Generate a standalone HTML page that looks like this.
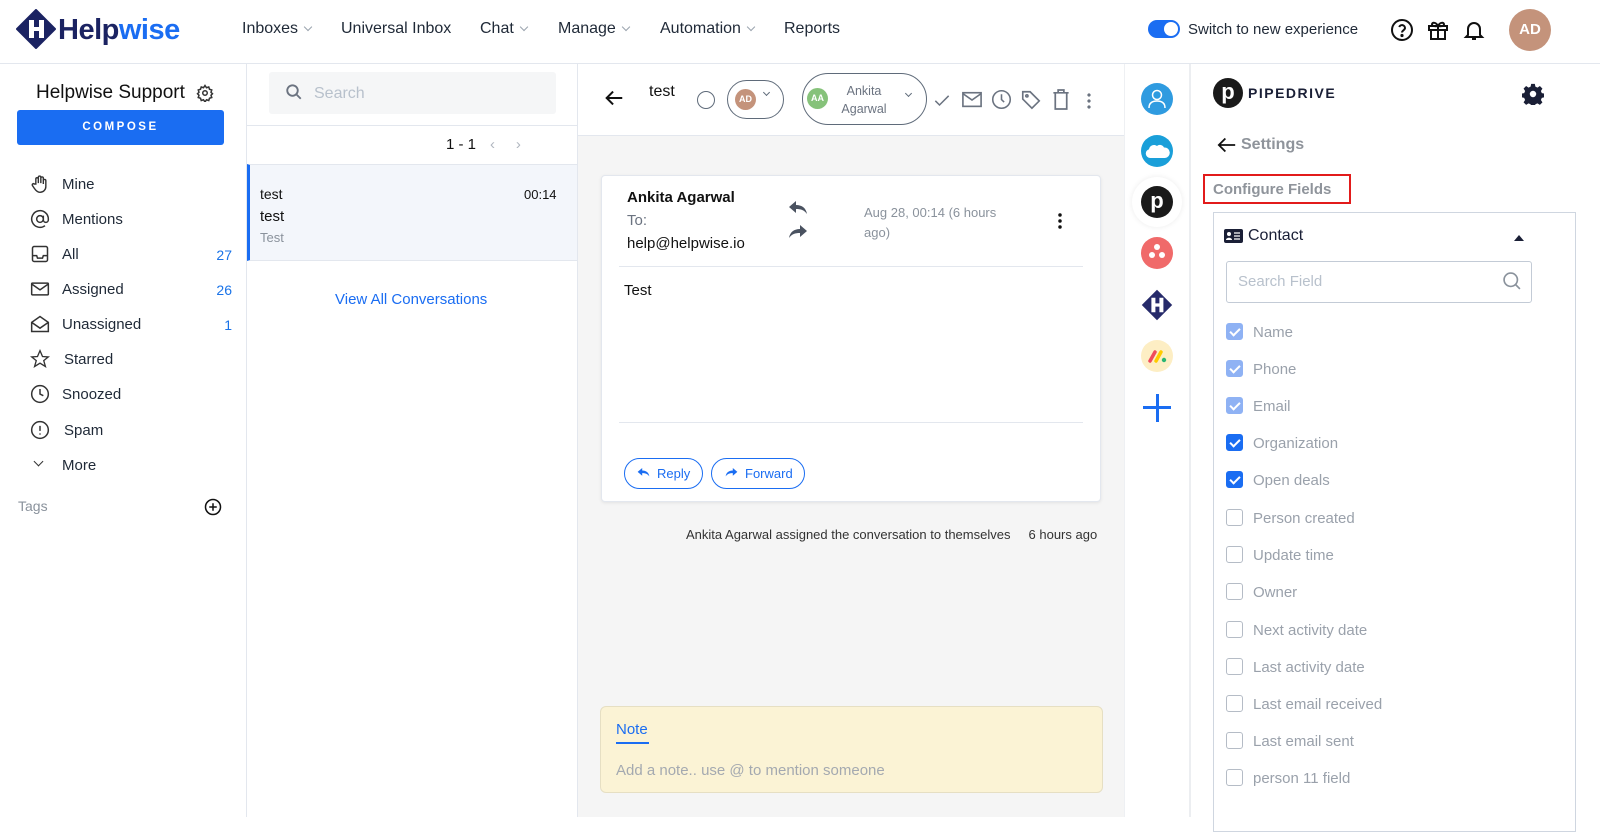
<!DOCTYPE html>
<html><head><meta charset="utf-8"><style>
*{box-sizing:border-box;margin:0;padding:0}
body{width:1600px;height:817px;overflow:hidden;font-family:"Liberation Sans",Arial,sans-serif;color:#1a1f36;background:#fff;position:relative}
.a{position:absolute}
.nav{font-size:16px;color:#1f2937;top:20px}
.chev{display:inline-block;width:6px;height:6px;border-right:1.3px solid #9aa3ae;border-bottom:1.3px solid #9aa3ae;transform:rotate(45deg);margin-left:7px;position:relative;top:-3px}
.side{font-size:15px;color:#1f2937;left:62px}
.cnt{font-size:14px;color:#1a73e8;right:1368px}
.ico{left:30px;width:20px;height:20px}
.cb{left:1226px;width:17px;height:17px;border:1.5px solid #b5bcc6;border-radius:3px}
.cb.on{background:#1a6df2;border-color:#1a6df2}
.cb.lt{background:#8fb2f4;border-color:#8fb2f4}
.cb.on:after,.cb.lt:after{content:"";position:absolute;left:4.5px;top:1.5px;width:4px;height:8px;border-right:2px solid #fff;border-bottom:2px solid #fff;transform:rotate(45deg)}
.fl{left:1253px;font-size:15px;color:#9aa1ab}
.rail{left:1141px;width:32px;height:32px;border-radius:50%}
</style></head><body>
<!-- top nav -->
<div class="a" style="left:0;top:63px;width:1600px;height:1px;background:#e3e7ee"></div>
<svg class="a" style="left:16px;top:9px" width="40" height="40" viewBox="0 0 40 40"><path d="M20 1 L39 20 L20 39 L1 20Z" fill="#1b2362" stroke="#1b2362" stroke-width="2" stroke-linejoin="round"/><path d="M13 11h5v7h5v-7h5v18h-5v-7h-5v7h-5z" fill="#fff"/></svg>
<div class="a" style="left:58px;top:14px;font-size:29px;font-weight:bold;color:#1b2362;letter-spacing:-0.5px">Help<span style="color:#1a6df2">wise</span></div>
<div class="a nav" style="left:242px">Inboxes<span class="chev"></span></div>
<div class="a nav" style="left:341px">Universal Inbox</div>
<div class="a nav" style="left:480px">Chat<span class="chev"></span></div>
<div class="a nav" style="left:558px">Manage<span class="chev"></span></div>
<div class="a nav" style="left:660px">Automation<span class="chev"></span></div>
<div class="a nav" style="left:784px">Reports</div>
<div class="a" style="left:1148px;top:20px;width:32px;height:18px;border-radius:9px;background:#1a6df2"><div style="position:absolute;right:2px;top:2px;width:14px;height:14px;border-radius:50%;background:#fff"></div></div>
<div class="a" style="left:1188px;top:21px;font-size:15px;color:#1f2937">Switch to new experience</div>
<svg class="a" style="left:1390px;top:18px" width="24" height="24" viewBox="0 0 24 24" fill="none" stroke="#111" stroke-width="2"><circle cx="12" cy="12" r="10"/><path d="M9.2 9a3 3 0 0 1 5.8 1c0 2-3 2.5-3 4.5"/><circle cx="12" cy="17.5" r=".6" fill="#111"/></svg>
<svg class="a" style="left:1426px;top:18px" width="24" height="24" viewBox="0 0 24 24" fill="none" stroke="#111" stroke-width="2"><rect x="3" y="8" width="18" height="4"/><path d="M5 12v9h14v-9M12 8v13M12 8c-2-4-6-4-6-1.5S12 8 12 8c2-4 6-4 6-1.5S12 8 12 8"/></svg>
<svg class="a" style="left:1462px;top:18px" width="24" height="24" viewBox="0 0 24 24" fill="none" stroke="#111" stroke-width="2"><path d="M6 17V11a6 6 0 0 1 12 0v6l2 2H4z M10 21h4"/></svg>
<div class="a" style="left:1509px;top:9px;width:42px;height:42px;border-radius:50%;background:#c4937b;color:#fff;font-size:15px;font-weight:bold;text-align:center;line-height:42px">AD</div>

<!-- left sidebar -->
<div class="a" style="left:246px;top:64px;width:1px;height:753px;background:#e3e7ee"></div>
<div class="a" style="left:36px;top:82px;font-size:19px;color:#111">Helpwise Support</div>
<svg class="a" style="left:196px;top:84px" width="18" height="18" viewBox="0 0 24 24" fill="none" stroke="#333" stroke-width="2"><circle cx="12" cy="12" r="3"/><path d="M12 2l2 3 3-1 1 3 3 1-1 3 2 2-2 2 1 3-3 1-1 3-3-1-2 3-2-3-3 1-1-3-3-1 1-3-2-2 2-2-1-3 3-1 1-3 3 1z"/></svg>
<div class="a" style="left:17px;top:110px;width:207px;height:35px;background:#1a6df2;border-radius:3px;color:#fff;font-size:11.5px;font-weight:bold;letter-spacing:2.5px;text-align:center;line-height:35px">COMPOSE</div>
<svg class="a ico" style="top:174px" viewBox="0 0 24 24" fill="none" stroke="#333" stroke-width="1.7"><path d="M7 12V6a1.5 1.5 0 0 1 3 0v5V4a1.5 1.5 0 0 1 3 0v7V5a1.5 1.5 0 0 1 3 0v7-4a1.5 1.5 0 0 1 3 0v7c0 4-3 7-7 7-3 0-5-2-7-5l-2-3c-1-2 1-3 2-2z"/></svg>
<div class="a side" style="top:176px">Mine</div>
<svg class="a ico" style="top:209px" viewBox="0 0 24 24" fill="none" stroke="#333" stroke-width="1.8"><circle cx="12" cy="12" r="4"/><path d="M16 8v5a3 3 0 0 0 6 0v-1a10 10 0 1 0-4 8"/></svg>
<div class="a side" style="top:211px">Mentions</div>
<svg class="a ico" style="top:244px" viewBox="0 0 24 24" fill="none" stroke="#333" stroke-width="1.8"><rect x="3" y="3" width="18" height="18" rx="2"/><path d="M3 14h5l1 3h6l1-3h5"/></svg>
<div class="a side" style="top:246px">All</div><div class="a cnt" style="top:247px">27</div>
<svg class="a ico" style="top:279px" viewBox="0 0 24 24" fill="none" stroke="#333" stroke-width="1.8"><rect x="2" y="5" width="20" height="14" rx="1"/><path d="M2 6l10 7 10-7"/></svg>
<div class="a side" style="top:281px">Assigned</div><div class="a cnt" style="top:282px">26</div>
<svg class="a ico" style="top:314px" viewBox="0 0 24 24" fill="none" stroke="#333" stroke-width="1.8"><path d="M2 10l10-7 10 7v11H2z M2 10l10 7 10-7"/></svg>
<div class="a side" style="top:316px">Unassigned</div><div class="a cnt" style="top:317px">1</div>
<svg class="a ico" style="top:349px" viewBox="0 0 24 24" fill="none" stroke="#333" stroke-width="1.6"><path d="M12 2l3 7 7 .5-5.5 4.5 2 7-6.5-4-6.5 4 2-7L2 9.5 9 9z"/></svg>
<div class="a side" style="top:351px;left:64px">Starred</div>
<svg class="a ico" style="top:384px" viewBox="0 0 24 24" fill="none" stroke="#333" stroke-width="1.8"><circle cx="12" cy="12" r="10"/><path d="M12 6v6l4 2"/></svg>
<div class="a side" style="top:386px">Snoozed</div>
<svg class="a ico" style="top:420px" viewBox="0 0 24 24" fill="none" stroke="#333" stroke-width="1.8"><circle cx="12" cy="12" r="10"/><path d="M12 7v6M12 16v1.5"/></svg>
<div class="a side" style="top:422px;left:64px">Spam</div>
<div class="a" style="left:35px;top:458px;width:7px;height:7px;border-right:1.6px solid #333;border-bottom:1.6px solid #333;transform:rotate(45deg)"></div>
<div class="a side" style="top:457px">More</div>
<div class="a" style="left:18px;top:498px;font-size:14px;color:#8a929c">Tags</div>
<svg class="a" style="left:204px;top:498px" width="18" height="18" viewBox="0 0 24 24" fill="none" stroke="#111" stroke-width="2"><circle cx="12" cy="12" r="10"/><path d="M12 7v10M7 12h10"/></svg>

<!-- list column -->
<div class="a" style="left:577px;top:64px;width:1px;height:753px;background:#e3e7ee"></div>
<div class="a" style="left:269px;top:72px;width:287px;height:42px;background:#f5f6f7;border-radius:3px"></div>
<svg class="a" style="left:285px;top:83px" width="18" height="18" viewBox="0 0 24 24" fill="none" stroke="#6b7380" stroke-width="2.5"><circle cx="10" cy="10" r="7"/><path d="M15 15l6 6"/></svg>
<div class="a" style="left:314px;top:85px;font-size:16px;color:#b8c1cc">Search</div>
<div class="a" style="left:247px;top:125px;width:330px;height:1px;background:#e3e7ee"></div>
<div class="a" style="left:446px;top:136px;font-size:15px;color:#111">1 - 1</div>
<div class="a" style="left:490px;top:136px;font-size:15px;color:#b0b6bf">&lsaquo;&nbsp;&nbsp;&nbsp;&nbsp;&nbsp;&rsaquo;</div>
<div class="a" style="left:247px;top:164px;width:330px;height:97px;background:#f3f6fb;border-top:1px solid #e3e7ee;border-bottom:1px solid #e3e7ee;border-left:3px solid #1a6df2"></div>
<div class="a" style="left:260px;top:186px;font-size:14px;color:#111">test</div>
<div class="a" style="left:524px;top:187px;font-size:13px;color:#111">00:14</div>
<div class="a" style="left:260px;top:208px;font-size:15px;color:#111">test</div>
<div class="a" style="left:260px;top:230px;font-size:13px;color:#8a929c">Test</div>
<div class="a" style="left:335px;top:291px;font-size:15px;color:#1a6df2">View All Conversations</div>

<!-- main -->
<div class="a" style="left:578px;top:135px;width:546px;height:682px;background:#f5f5f5;border-top:1px solid #e3e7ee"></div>
<svg class="a" style="left:603px;top:87px" width="22" height="22" viewBox="0 0 24 24" fill="none" stroke="#111" stroke-width="2.2"><path d="M21 12H4M11 5l-7 7 7 7"/></svg>
<div class="a" style="left:649px;top:83px;font-size:16px;color:#111">test</div>
<div class="a" style="left:697px;top:91px;width:18px;height:18px;border-radius:50%;border:1.5px solid #5f6b7a"></div>
<div class="a" style="left:727px;top:80px;width:57px;height:39px;border-radius:20px;border:1.2px solid #5f6b7a"></div>
<div class="a" style="left:735px;top:89px;width:21px;height:21px;border-radius:50%;background:#c4937b;color:#fff;font-size:9px;font-weight:bold;text-align:center;line-height:21px">AD</div>
<div class="a" style="left:764px;top:90px;width:5px;height:5px;border-right:1.2px solid #5f6b7a;border-bottom:1.2px solid #5f6b7a;transform:rotate(45deg)"></div>
<div class="a" style="left:802px;top:73px;width:125px;height:52px;border-radius:26px;border:1.2px solid #5f6b7a"></div>
<div class="a" style="left:807px;top:88px;width:21px;height:21px;border-radius:50%;background:#86c27a;color:#fff;font-size:9px;font-weight:bold;text-align:center;line-height:21px">AA</div>
<div class="a" style="left:834px;top:82px;width:60px;font-size:12.5px;color:#6b7380;text-align:center;line-height:18px">Ankita Agarwal</div>
<div class="a" style="left:906px;top:91px;width:5px;height:5px;border-right:1.2px solid #5f6b7a;border-bottom:1.2px solid #5f6b7a;transform:rotate(45deg)"></div>
<svg class="a" style="left:932px;top:90px" width="20" height="20" viewBox="0 0 24 24" fill="none" stroke="#6b7380" stroke-width="1.8"><path d="M4 13l5 5L20 7"/></svg>
<svg class="a" style="left:961px;top:90px" width="22" height="20" viewBox="0 0 24 22" fill="none" stroke="#6b7380" stroke-width="1.8"><rect x="2" y="3" width="20" height="15"/><path d="M2 4l10 7 10-7"/></svg>
<svg class="a" style="left:991px;top:89px" width="21" height="21" viewBox="0 0 24 24" fill="none" stroke="#6b7380" stroke-width="1.8"><circle cx="12" cy="12" r="10"/><path d="M12 6v6l3 3"/></svg>
<svg class="a" style="left:1020px;top:89px" width="22" height="22" viewBox="0 0 24 24" fill="none" stroke="#6b7380" stroke-width="1.8"><path d="M3 3h8l10 10-8 8L3 11z"/><circle cx="7.5" cy="7.5" r="1.2"/></svg>
<svg class="a" style="left:1052px;top:89px" width="18" height="21" viewBox="0 0 18 22" fill="none" stroke="#6b7380" stroke-width="1.8"><path d="M1 4h16M6 4V1h6v3M3 4v17h12V4"/></svg>
<div class="a" style="left:1087px;top:92px;width:4px;height:18px;background:radial-gradient(circle,#6b7380 1.6px,transparent 1.8px) 0 0/4px 6px"></div>

<div class="a" style="left:601px;top:175px;width:500px;height:327px;background:#fff;border:1px solid #e3e7ee;border-radius:4px;box-shadow:0 1px 3px rgba(0,0,0,.08)"></div>
<div class="a" style="left:627px;top:189px;font-size:15px;font-weight:bold;color:#111">Ankita Agarwal</div>
<div class="a" style="left:627px;top:212px;font-size:15px;color:#6b7380">To:</div>
<div class="a" style="left:627px;top:235px;font-size:15px;color:#111">help@helpwise.io</div>
<svg class="a" style="left:788px;top:200px" width="20" height="16" viewBox="0 0 20 16"><path d="M8 1L1 7l7 6V9c5 0 8 1 11 5-1-6-5-9-11-9z" fill="#4a5260"/></svg>
<svg class="a" style="left:788px;top:224px" width="20" height="16" viewBox="0 0 20 16"><path d="M12 1l7 6-7 6V9C7 9 4 10 1 14c1-6 5-9 11-9z" fill="#4a5260"/></svg>
<div class="a" style="left:864px;top:203px;width:150px;font-size:13px;color:#8a929c;line-height:20px">Aug 28, 00:14 (6 hours ago)</div>
<div class="a" style="left:1058px;top:212px;width:4px;height:18px;background:radial-gradient(circle,#111 1.7px,transparent 1.9px) 0 0/4px 6px"></div>
<div class="a" style="left:619px;top:266px;width:464px;height:1px;background:#e3e7ee"></div>
<div class="a" style="left:624px;top:282px;font-size:15px;color:#111">Test</div>
<div class="a" style="left:619px;top:422px;width:464px;height:1px;background:#e3e7ee"></div>
<div class="a" style="left:624px;top:458px;width:79px;height:31px;border:1px solid #1a6df2;border-radius:16px;font-size:13px;color:#1a6df2;line-height:29px;padding-left:32px">Reply</div>
<svg class="a" style="left:637px;top:467px" width="13" height="11" viewBox="0 0 20 16"><path d="M8 1L1 7l7 6V9c5 0 8 1 11 5-1-6-5-9-11-9z" fill="#1a6df2"/></svg>
<div class="a" style="left:711px;top:458px;width:94px;height:31px;border:1px solid #1a6df2;border-radius:16px;font-size:13px;color:#1a6df2;line-height:29px;padding-left:33px">Forward</div>
<svg class="a" style="left:725px;top:467px" width="13" height="11" viewBox="0 0 20 16"><path d="M12 1l7 6-7 6V9C7 9 4 10 1 14c1-6 5-9 11-9z" fill="#1a6df2"/></svg>
<div class="a" style="left:686px;top:527px;font-size:13px;color:#333">Ankita Agarwal assigned the conversation to themselves&nbsp;&nbsp;&nbsp;&nbsp;&nbsp;6 hours ago</div>
<div class="a" style="left:600px;top:706px;width:503px;height:87px;background:#fbf3d5;border:1px solid #e6dfc3;border-radius:6px"></div>
<div class="a" style="left:616px;top:721px;font-size:15px;color:#1a6df2">Note</div>
<div class="a" style="left:616px;top:742px;width:33px;height:2px;background:#1a6df2"></div>
<div class="a" style="left:616px;top:762px;font-size:15px;color:#a4a9b0">Add a note.. use @ to mention someone</div>

<!-- rail -->
<div class="a" style="left:1124px;top:64px;width:66px;height:753px;background:#fff;border-left:1px solid #eef0f3"></div>
<div class="a" style="left:1189px;top:64px;width:2px;height:753px;background:#eceef1"></div>
<div class="a rail" style="top:83px;background:#2f9be0"></div>
<svg class="a" style="left:1147px;top:88px" width="20" height="22" viewBox="0 0 20 22" fill="none" stroke="#fff" stroke-width="1.5"><circle cx="10" cy="7" r="4.5"/><path d="M2 20c0-5 3-7 8-7s8 2 8 7"/></svg>
<div class="a rail" style="top:135px;background:#1a9fd9"></div>
<svg class="a" style="left:1144px;top:142px" width="26" height="18" viewBox="0 0 26 18"><path d="M6 16a4.5 4.5 0 0 1-1-8.8A5 5 0 0 1 13 4a4.5 4.5 0 0 1 7 1.5A5 5 0 0 1 21 16z" fill="#fff"/></svg>
<div class="a" style="left:1132px;top:177px;width:50px;height:50px;border-radius:50%;background:#fff;box-shadow:0 0 6px rgba(0,0,0,.08)"></div>
<div class="a rail" style="top:186px;background:#1a1a1a;color:#fff;font-size:22px;font-weight:bold;text-align:center;line-height:30px">p</div>
<div class="a rail" style="top:237px;background:#f06a6a"></div>
<div class="a" style="left:1154px;top:244px;width:6px;height:6px;border-radius:50%;background:#fff;box-shadow:-5px 8px 0 #fff,5px 8px 0 #fff"></div>
<svg class="a" style="left:1141px;top:289px" width="32" height="32" viewBox="0 0 40 40"><path d="M20 1 L39 20 L20 39 L1 20Z" fill="#262a6a"/><path d="M13 11h5v7h5v-7h5v18h-5v-7h-5v7h-5z" fill="#fff"/></svg>
<div class="a rail" style="top:340px;background:#fdeec4"></div>
<svg class="a" style="left:1148px;top:348px" width="20" height="16" viewBox="0 0 20 16"><path d="M2 13L7 4" stroke="#f04b5c" stroke-width="3.5" stroke-linecap="round"/><path d="M8 13L13 4" stroke="#ffcb00" stroke-width="3.5" stroke-linecap="round"/><circle cx="16" cy="12" r="2.2" fill="#2bb673"/></svg>
<div class="a" style="left:1156px;top:394px;width:3px;height:28px;background:#1a6df2"></div>
<div class="a" style="left:1143px;top:406px;width:28px;height:3px;background:#1a6df2"></div>

<!-- right panel -->
<div class="a" style="left:1213px;top:78px;width:30px;height:30px;border-radius:50%;background:#1a1a1a;color:#fff;font-size:22px;font-weight:bold;text-align:center;line-height:28px">p</div>
<div class="a" style="left:1248px;top:85px;font-size:14px;font-weight:bold;color:#1a1f36;letter-spacing:1.5px">PIPEDRIVE</div>
<svg class="a" style="left:1522px;top:83px" width="22" height="22" viewBox="0 0 24 24"><path fill="#1a1f36" d="M10 1h4l.6 3 2.3 1 2.6-1.7 2.8 2.8-1.7 2.6 1 2.3 3 .6v4l-3 .6-1 2.3 1.7 2.6-2.8 2.8-2.6-1.7-2.3 1-.6 3h-4l-.6-3-2.3-1-2.6 1.7-2.8-2.8 1.7-2.6-1-2.3-3-.6v-4l3-.6 1-2.3-1.7-2.6 2.8-2.8 2.6 1.7 2.3-1zM12 8.5a3.5 3.5 0 1 0 0 7 3.5 3.5 0 0 0 0-7z"/></svg>
<svg class="a" style="left:1217px;top:136px" width="20" height="18" viewBox="0 0 24 22" fill="none" stroke="#111" stroke-width="2.2"><path d="M22 11H3M10 3l-8 8 8 8"/></svg>
<div class="a" style="left:1241px;top:136px;font-size:16px;font-weight:bold;color:#8f949b">Settings</div>
<div class="a" style="left:1203px;top:174px;width:148px;height:30px;border:2px solid #e21b1b"></div>
<div class="a" style="left:1213px;top:181px;font-size:15px;font-weight:bold;color:#8f949b">Configure Fields</div>
<div class="a" style="left:1213px;top:212px;width:363px;height:620px;border:1px solid #cfd6e0"></div>
<svg class="a" style="left:1224px;top:229px" width="19" height="14" viewBox="0 0 19 14"><rect width="19" height="14" rx="2" fill="#1a1f36"/><circle cx="5" cy="5" r="2" fill="#fff"/><path d="M2 11c0-3 6-3 6 0z" fill="#fff"/><path d="M10 4h6M10 7h6M10 10h6" stroke="#fff" stroke-width="1.3"/></svg>
<div class="a" style="left:1248px;top:227px;font-size:16px;color:#1a1f36">Contact</div>
<div class="a" style="left:1514px;top:235px;width:0;height:0;border-left:5px solid transparent;border-right:5px solid transparent;border-bottom:6px solid #1a1f36"></div>
<div class="a" style="left:1226px;top:261px;width:306px;height:42px;border:1px solid #c3cbd6;border-radius:3px"></div>
<div class="a" style="left:1238px;top:273px;font-size:15px;color:#b8c1cc">Search Field</div>
<svg class="a" style="left:1502px;top:271px" width="20" height="20" viewBox="0 0 24 24" fill="none" stroke="#8a929c" stroke-width="2"><circle cx="10.5" cy="10.5" r="8"/><path d="M16.5 16.5l5 5"/></svg>

<div class="a cb lt" style="top:323px"></div><div class="a fl" style="top:324px">Name</div>
<div class="a cb lt" style="top:360px"></div><div class="a fl" style="top:361px">Phone</div>
<div class="a cb lt" style="top:397px"></div><div class="a fl" style="top:398px">Email</div>
<div class="a cb on" style="top:434px"></div><div class="a fl" style="top:435px">Organization</div>
<div class="a cb on" style="top:471px"></div><div class="a fl" style="top:472px">Open deals</div>
<div class="a cb" style="top:509px"></div><div class="a fl" style="top:510px">Person created</div>
<div class="a cb" style="top:546px"></div><div class="a fl" style="top:547px">Update time</div>
<div class="a cb" style="top:583px"></div><div class="a fl" style="top:584px">Owner</div>
<div class="a cb" style="top:621px"></div><div class="a fl" style="top:622px">Next activity date</div>
<div class="a cb" style="top:658px"></div><div class="a fl" style="top:659px">Last activity date</div>
<div class="a cb" style="top:695px"></div><div class="a fl" style="top:696px">Last email received</div>
<div class="a cb" style="top:732px"></div><div class="a fl" style="top:733px">Last email sent</div>
<div class="a cb" style="top:769px"></div><div class="a fl" style="top:770px">person 11 field</div>
</body></html>
